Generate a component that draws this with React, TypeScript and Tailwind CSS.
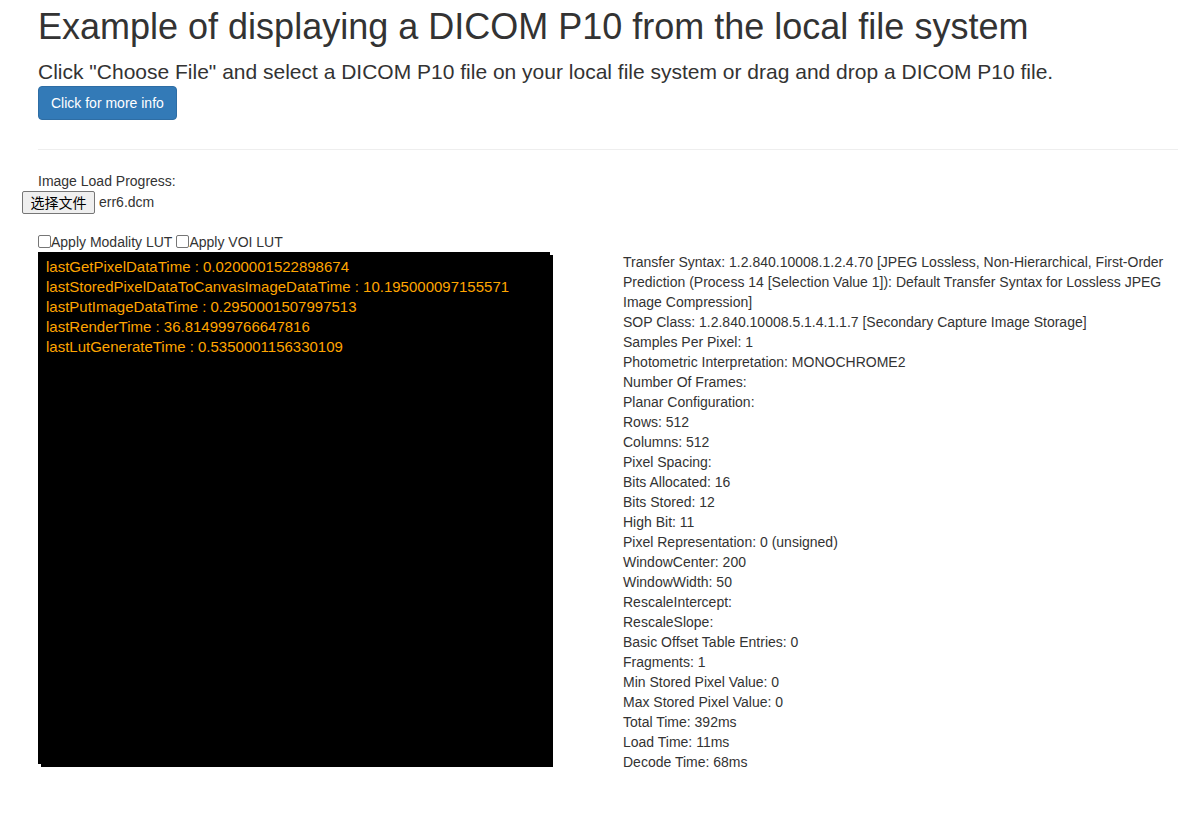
export default function App() {
  const timings = [
    'lastGetPixelDataTime : 0.0200001522898674',
    'lastStoredPixelDataToCanvasImageDataTime : 10.195000097155571',
    'lastPutImageDataTime : 0.2950001507997513',
    'lastRenderTime : 36.814999766647816',
    'lastLutGenerateTime : 0.5350001156330109',
  ];

  const info = [
    'Transfer Syntax: 1.2.840.10008.1.2.4.70 [JPEG Lossless, Non-Hierarchical, First-Order Prediction (Process 14 [Selection Value 1]): Default Transfer Syntax for Lossless JPEG Image Compression]',
    'SOP Class: 1.2.840.10008.5.1.4.1.1.7 [Secondary Capture Image Storage]',
    'Samples Per Pixel: 1',
    'Photometric Interpretation: MONOCHROME2',
    'Number Of Frames:',
    'Planar Configuration:',
    'Rows: 512',
    'Columns: 512',
    'Pixel Spacing:',
    'Bits Allocated: 16',
    'Bits Stored: 12',
    'High Bit: 11',
    'Pixel Representation: 0 (unsigned)',
    'WindowCenter: 200',
    'WindowWidth: 50',
    'RescaleIntercept:',
    'RescaleSlope:',
    'Basic Offset Table Entries: 0',
    'Fragments: 1',
    'Min Stored Pixel Value: 0',
    'Max Stored Pixel Value: 0',
    'Total Time: 392ms',
    'Load Time: 11ms',
    'Decode Time: 68ms',
  ];

  return (
    <div className="min-h-screen bg-white pl-[38px] pr-[15px] text-[14px] leading-[20px] text-[#333] font-['Liberation_Sans',Arial,sans-serif]">
      {/* Header */}
      <h1 className="pt-[7px] text-[36px] leading-[1.1] font-normal">
        Example of displaying a DICOM P10 from the local file system
      </h1>
      <p className="mt-[14px] text-[21px] leading-[22px]">
        Click "Choose File" and select a DICOM P10 file on your local file system or drag and drop a DICOM P10 file.
      </p>
      <button className="mt-[3px] h-[34px] rounded-[4px] border border-[#2e6da4] bg-[#337ab7] px-[12px] text-[14px] text-white">
        Click for more info
      </button>

      <hr className="mt-[29px] mb-[21px] border-t border-[#eee]" />

      {/* Controls */}
      <div>Image Load Progress:</div>
      <div className="-ml-[16px] flex h-[23px] items-center">
        <span className="flex h-[23px] w-[73px] items-center justify-center rounded-[2px] border border-[#767676] bg-[#efefef] text-[14px] text-black font-['Noto_Sans_CJK_SC',sans-serif]">
          选择文件
        </span>
        <span className="ml-[4px] text-[#333]">err6.dcm</span>
      </div>
      <div className="mt-[18px] flex h-[20px] items-center">
        <span className="h-[13px] w-[13px] rounded-[2px] border border-[#767676] bg-white" />
        <span>Apply Modality LUT</span>
        <span className="ml-[4px] h-[13px] w-[13px] rounded-[2px] border border-[#767676] bg-white" />
        <span>Apply VOI LUT</span>
      </div>

      {/* Viewer + metadata */}
      <div className="flex">
        <div className="w-[585px] shrink-0">
          <div className="relative h-[512px] w-[512px] border-[3px] border-black">
            <div className="h-[512px] w-[512px] bg-black" />
            <div className="absolute left-[5px] top-[2px] text-[15px] leading-[20px] text-[#ffa500]">
              {timings.map((t) => (
                <div key={t}>{t}</div>
              ))}
            </div>
          </div>
        </div>
        <div className="w-[555px]">
          {info.map((line) => (
            <div key={line}>{line}</div>
          ))}
        </div>
      </div>
    </div>
  );
}
